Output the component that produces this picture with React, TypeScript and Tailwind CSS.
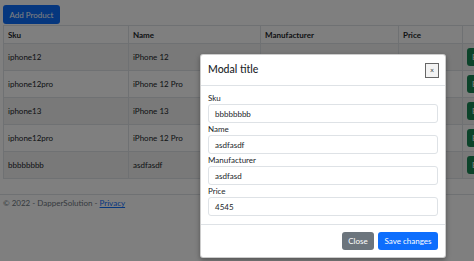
const products = [
  { sku: "iphone12", name: "iPhone 12", manufacturer: "Apple", price: "999" },
  { sku: "iphone12pro", name: "iPhone 12 Pro", manufacturer: "Apple", price: "1099" },
  { sku: "iphone13", name: "iPhone 13", manufacturer: "Apple", price: "799" },
  { sku: "iphone12pro", name: "iPhone 12 Pro", manufacturer: "Apple", price: "1099" },
  { sku: "bbbbbbbb", name: "asdfasdf", manufacturer: "asdfasd", price: "4545" },
];

const fields = [
  { label: "Sku", value: "bbbbbbbb" },
  { label: "Name", value: "asdfasdf" },
  { label: "Manufacturer", value: "asdfasd" },
  { label: "Price", value: "4545" },
];

export default function App() {
  return (
    <div className="relative w-[474px] h-[261px] overflow-hidden bg-white text-[#212529] text-[8px] font-['Lato',sans-serif]">
      {/* page */}
      <div className="px-[3px] pt-[5px]">
        <button className="h-[19px] w-[57px] rounded-[3px] bg-[#0d6efd] text-white text-[8px] leading-none">
          Add Product
        </button>
        <table className="mt-px table-fixed border-collapse w-[540px]">
          <colgroup>
            <col className="w-[125px]" />
            <col className="w-[132px]" />
            <col className="w-[138px]" />
            <col className="w-[64px]" />
            <col className="w-[81px]" />
          </colgroup>
          <thead>
            <tr className="h-[18px]">
              {["Sku", "Name", "Manufacturer", "Price", ""].map((h, i) => (
                <th key={i} className="border border-[#dee2e6] px-[4px] text-left font-bold">
                  {h}
                </th>
              ))}
            </tr>
          </thead>
          <tbody>
            {products.map((p, i) => (
              <tr key={i} className={i % 2 === 0 ? "h-[27px] bg-[#f2f2f2]" : "h-[27px] bg-white"}>
                <td className="border border-[#dee2e6] px-[4px] align-middle">{p.sku}</td>
                <td className="border border-[#dee2e6] px-[4px] align-middle">{p.name}</td>
                <td className="border border-[#dee2e6] px-[4px] align-middle">{p.manufacturer}</td>
                <td className="border border-[#dee2e6] px-[4px] align-middle">{p.price}</td>
                <td className="border border-[#dee2e6] px-[4px] align-middle">
                  <div className="flex gap-[3px]">
                    <button className="h-[18px] px-[5px] rounded-[3px] bg-[#198754] text-white">Edit</button>
                    <button className="h-[18px] px-[5px] rounded-[3px] bg-[#dc3545] text-white">Delete</button>
                  </div>
                </td>
              </tr>
            ))}
          </tbody>
        </table>
      </div>
      <footer className="mt-[15px] border-t border-[#dee2e6] px-[3px] pt-[2px] text-[#6c757d] leading-[12px]">
        &copy; 2022 - DapperSolution - <a href="#" className="text-[#0d6efd] underline">Privacy</a>
      </footer>

      {/* backdrop */}
      <div className="absolute inset-0 bg-black/50" />

      {/* modal */}
      <div className="absolute left-[200px] top-[54px] w-[246px] h-[204px] flex flex-col bg-white rounded-[3px] border border-black/20 shadow-[0_2px_5px_rgba(0,0,0,0.35)]">
        <div className="h-[31px] flex items-center justify-between pl-[7px] pr-[6px] border-b border-[#dee2e6]">
          <h5 className="text-[10.5px] font-medium text-[#212529]">Modal title</h5>
          <button className="w-[14px] h-[15px] flex items-center justify-center border border-[#666] bg-[#f3f3f3] text-[7px] leading-none text-[#333]">
            ×
          </button>
        </div>
        <div className="flex flex-col gap-px px-[7px] pt-[7px] pb-[8px]">
          {fields.map((f) => (
            <div key={f.label}>
              <label className="block leading-[11px]">{f.label}</label>
              <div className="h-[19px] flex items-center rounded-[3px] border border-[#dee2e6] px-[6px]">
                {f.value}
              </div>
            </div>
          ))}
        </div>
        <div className="flex-1 flex items-center justify-end gap-[4px] px-[7px] border-t border-[#dee2e6]">
          <button className="h-[18px] w-[32px] rounded-[3px] bg-[#6c757d] text-white">Close</button>
          <button className="h-[18px] w-[60px] rounded-[3px] bg-[#0d6efd] text-white">Save changes</button>
        </div>
      </div>
    </div>
  );
}
